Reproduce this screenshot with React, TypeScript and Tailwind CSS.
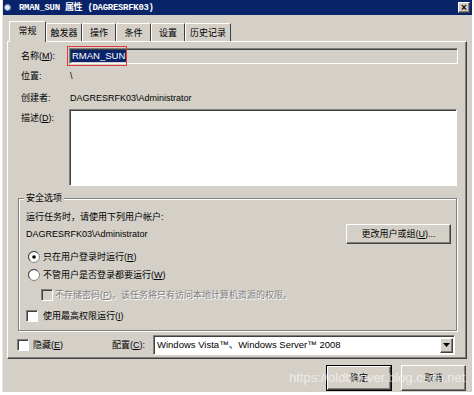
import React from 'react'

const raised =
  'border border-t-white border-l-white border-r-[#404040] border-b-[#404040] shadow-[inset_-1px_-1px_0_#808080]'
const sunken =
  'border border-t-[#808080] border-l-[#808080] border-r-white border-b-white shadow-[inset_1px_1px_0_#404040]'

function Radio({ checked }: { checked?: boolean }) {
  return (
    <svg width="12" height="12" viewBox="0 0 12 12" className="shrink-0">
      <circle cx="6" cy="6" r="5.5" fill="#fff" stroke="#808080" />
      <path d="M2 9.5A5 5 0 0 1 9.5 2" stroke="#404040" fill="none" />
      {checked && <circle cx="6" cy="6" r="1.8" fill="#000" />}
    </svg>
  )
}

function Check({ disabled }: { disabled?: boolean }) {
  return <span className={`block w-[12px] h-[12px] shrink-0 ${sunken} ${disabled ? 'bg-[#d4d0c8]' : 'bg-white'}`} />
}

const tabs = [
  { t: '触发器', w: 36 },
  { t: '操作', w: 34 },
  { t: '条件', w: 35 },
  { t: '设置', w: 34 },
  { t: '历史记录', w: 46 },
]

export default function App() {
  return (
    <div className="w-[474px] h-[395px] bg-white relative overflow-hidden font-['Liberation_Sans','Noto_Sans_CJK_SC',sans-serif] text-[9px] text-black leading-[12px]">
      <div className="ml-[2px] w-[470px] h-[392px] bg-[#d4d0c8] flex flex-col border-l border-[#e8e6e0]">
        {/* title bar */}
        <div className="h-[15px] bg-[#0a246a] flex items-center pl-[1px] pr-[2px]">
          <span className="w-[7px] h-[7px] rounded-full bg-[#dfe6f0] border border-[#6c8cc0]" />
          <span className="ml-[8px] text-white font-bold font-['Liberation_Mono','Noto_Sans_CJK_SC',monospace] text-[9px] tracking-[-0.3px]">
            RMAN_SUN 属性 (DAGRESRFK03)
          </span>
          <span className={`ml-auto w-[12px] h-[11px] bg-[#d4d0c8] ${raised} flex items-center justify-center text-[10px] leading-none font-bold`}>
            ×
          </span>
        </div>

        {/* tabs */}
        <div className="mt-[5px] ml-[6px] flex items-end h-[21px] relative z-10">
          <div className="w-[37px] h-[21px] bg-[#d4d0c8] border-t border-l border-white border-r border-r-[#404040] flex items-center justify-center pb-[2px] -mb-px">
            常规
          </div>
          {tabs.map((x) => (
            <div
              key={x.t}
              style={{ width: x.w }}
              className="h-[18px] border-t border-l border-white border-r border-r-[#404040] flex items-center justify-center"
            >
              {x.t}
            </div>
          ))}
        </div>

        {/* tab panel */}
        <div className={`ml-[4px] w-[460px] h-[318px] ${raised} flex flex-col pl-[10px]`}>
          <div className="flex items-center mt-[6px] h-[16px]">
            <span className="w-[51px] pl-[3px]">
              名称(<u>M</u>):
            </span>
            <div className={`relative w-[389px] h-[16px] ${sunken} bg-[#d4d0c8] flex items-center pl-[1px]`}>
              <span className="bg-[#0a246a] text-white text-[9.5px] leading-[12px] px-[1px]">RMAN_SUN</span>
              <span className="absolute -left-[3px] -top-[3px] w-[60px] h-[20px] border-[1.5px] border-[#e0393c]" />
            </div>
          </div>
          <div className="flex items-center mt-[4px] h-[16px]">
            <span className="w-[51px] pl-[3px]">位置:</span>
            <span className="pl-[1px]">\</span>
          </div>
          <div className="flex items-center mt-[6px] h-[16px]">
            <span className="w-[51px] pl-[3px]">创建者:</span>
            <span className="pl-[1px]">DAGRESRFK03\Administrator</span>
          </div>
          <div className="flex mt-[3px]">
            <span className="w-[51px] pl-[3px] pt-[3px]">
              描述(<u>D</u>):
            </span>
            <div className={`w-[388px] h-[77px] ${sunken} bg-white`} />
          </div>

          {/* group box */}
          <div className="relative mt-[12px] w-[439px] h-[133px] border border-[#808080] shadow-[inset_1px_1px_0_#fff,1px_1px_0_#fff] pl-[7px] flex flex-col">
            <span className="absolute -top-[7px] left-[5px] bg-[#d4d0c8] px-[2px]">安全选项</span>
            <div className="mt-[12px] h-[12px] flex items-center">运行任务时，请使用下列用户帐户:</div>
            <div className="mt-[1px] h-[20px] flex items-center justify-between pr-[5px]">
              <span>DAGRESRFK03\Administrator</span>
              <span className={`w-[105px] h-[20px] ${raised} flex items-center justify-center`}>
                更改用户或组(<u>U</u>)...
              </span>
            </div>
            <div className="mt-[6px] h-[14px] flex items-center gap-[3px] pl-[2px]">
              <Radio checked />
              <span>
                只在用户登录时运行(<u>R</u>)
              </span>
            </div>
            <div className="mt-[4px] h-[14px] flex items-center gap-[3px] pl-[2px]">
              <Radio />
              <span>
                不管用户是否登录都要运行(<u>W</u>)
              </span>
            </div>
            <div className="mt-[6px] h-[14px] flex items-center gap-[2px] pl-[15px]">
              <Check disabled />
              <span className="text-[#808080] [text-shadow:1px_1px_0_#fff]">
                不存储密码(<u>P</u>)。该任务将只有访问本地计算机资源的权限。
              </span>
            </div>
            <div className="mt-[7px] h-[14px] flex items-center gap-[5px]">
              <Check />
              <span>
                使用最高权限运行(<u>I</u>)
              </span>
            </div>
          </div>

          {/* hidden + config */}
          <div className="mt-[4px] h-[20px] flex items-center">
            <span className="-ml-[1px]">
              <Check />
            </span>
            <span className="ml-[4px] w-[79px]">
              隐藏(<u>E</u>)
            </span>
            <span className="w-[41px]">
              配置(<u>C</u>):
            </span>
            <div className={`w-[302px] h-[20px] ${sunken} bg-white flex items-center pl-[3px]`}>
              <span className="text-[9.5px]">Windows Vista™、Windows Server™ 2008</span>
              <span className={`ml-auto mr-[1px] w-[13px] h-[15px] bg-[#d4d0c8] ${raised} flex items-center justify-center`}>
                <svg width="7" height="4" viewBox="0 0 7 4">
                  <path d="M0 0h7L3.5 4z" fill="#000" />
                </svg>
              </span>
            </div>
          </div>
        </div>

        {/* buttons */}
        <div className="mt-[6px] flex justify-end gap-[9px] pr-[6px]">
          <span className="w-[66px] h-[26px] border border-black">
            <span className={`w-full h-full ${raised} flex items-center justify-center`}>确定</span>
          </span>
          <span className={`w-[65px] h-[26px] ${raised} flex items-center justify-center`}>取消</span>
        </div>
      </div>

      {/* watermark */}
      <span className="absolute left-[289px] top-[370px] text-[13px] leading-[16px] font-['Liberation_Sans',sans-serif] text-white/60">
        https://oldbdriver.blog.csdn.net
      </span>
    </div>
  )
}
